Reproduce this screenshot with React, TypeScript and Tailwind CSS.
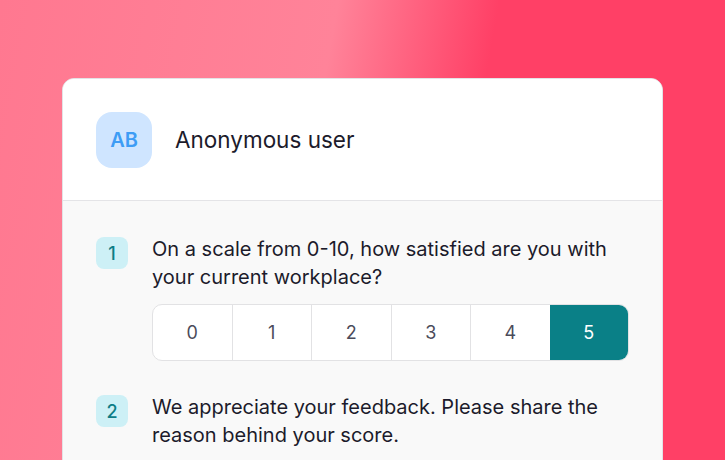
import React from "react";

export default function App() {
  const values = [0, 1, 2, 3, 4, 5];
  const selected = 5;
  return (
    <div
      className="w-[725px] h-[460px] overflow-hidden bg-[linear-gradient(100deg,#ff7890_0%,#ff8399_42%,#ff4066_62%,#ff4066_100%)] pt-[78px] pl-[62px]"
      style={{ fontFamily: "Inter, 'Noto Sans', sans-serif" }}
    >
      <div className="w-[601px] h-[420px] rounded-[12px] border border-[#e3e3e6] bg-[#f9f9f9] overflow-hidden">
        <div className="h-[122px] bg-white border-b border-[#e4e4e7] flex items-center px-[33px] gap-[23px]">
          <div className="w-[56px] h-[56px] rounded-[16px] bg-[#cfe5ff] flex items-center justify-center text-[20px] font-semibold text-[#3d9cf5]">
            AB
          </div>
          <div className="text-[22.5px] text-[#1c1b2b]">Anonymous user</div>
        </div>
        <div className="px-[33px] pt-[34px] flex flex-col gap-[32px]">
          <div className="flex gap-[24px]">
            <div className="w-[32px] h-[32px] mt-[2px] shrink-0 rounded-[8px] bg-[#cdf0f6] flex items-center justify-center text-[18px] font-medium text-[#0e7d86]">
              1
            </div>
            <div className="flex flex-col">
              <div className="text-[20px] leading-[28px] text-[#1c1b2b] w-[470px]">
                On a scale from 0-10, how satisfied are you with your current workplace?
              </div>
              <div className="mt-[13px] w-[477px] h-[57px] flex rounded-[10px] border border-[#e2e2e4] bg-white overflow-hidden">
                {values.map((v, i) => (
                  <div
                    key={v}
                    className={
                      "flex-1 flex items-center justify-center text-[18px] " +
                      (v === selected
                        ? "bg-[#0a8087] text-white"
                        : "text-[#4b4b5a]") +
                      (i > 0 && v !== selected ? " border-l border-[#e2e2e4]" : "")
                    }
                  >
                    {v}
                  </div>
                ))}
              </div>
            </div>
          </div>
          <div className="flex gap-[24px]">
            <div className="w-[32px] h-[32px] mt-[2px] shrink-0 rounded-[8px] bg-[#cdf0f6] flex items-center justify-center text-[18px] font-medium text-[#0e7d86]">
              2
            </div>
            <div className="text-[20px] leading-[28px] text-[#1c1b2b] w-[470px]">
              We appreciate your feedback. Please share the reason behind your score.
            </div>
          </div>
        </div>
      </div>
    </div>
  );
}
